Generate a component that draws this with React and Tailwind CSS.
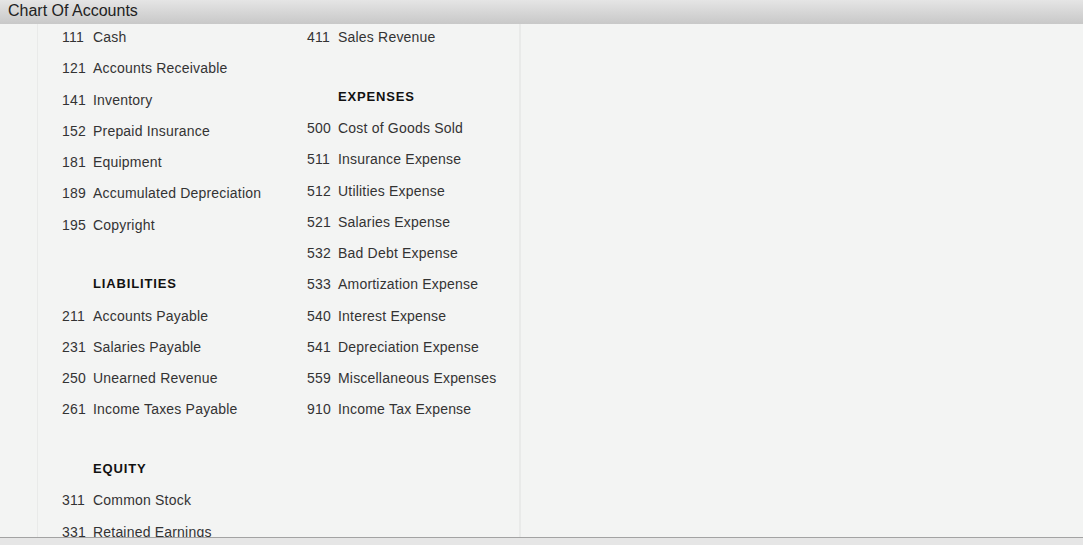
import React from "react";

const left = [
  ["111", "Cash"],
  ["121", "Accounts Receivable"],
  ["141", "Inventory"],
  ["152", "Prepaid Insurance"],
  ["181", "Equipment"],
  ["189", "Accumulated Depreciation"],
  ["195", "Copyright"],
  null,
  "LIABILITIES",
  ["211", "Accounts Payable"],
  ["231", "Salaries Payable"],
  ["250", "Unearned Revenue"],
  ["261", "Income Taxes Payable"],
  null,
  "EQUITY",
  ["311", "Common Stock"],
  ["331", "Retained Earnings"],
];

const right = [
  ["411", "Sales Revenue"],
  null,
  "EXPENSES",
  ["500", "Cost of Goods Sold"],
  ["511", "Insurance Expense"],
  ["512", "Utilities Expense"],
  ["521", "Salaries Expense"],
  ["532", "Bad Debt Expense"],
  ["533", "Amortization Expense"],
  ["540", "Interest Expense"],
  ["541", "Depreciation Expense"],
  ["559", "Miscellaneous Expenses"],
  ["910", "Income Tax Expense"],
];

function Column({ items }) {
  return (
    <div className="flex flex-col">
      {items.map((it, i) => {
        if (it === null) return <div key={i} className="h-[28.5px]" />;
        if (typeof it === "string")
          return (
            <div key={i} className="h-[31.25px] pt-[5px] pl-[31px] leading-4 text-[13px] font-bold tracking-[0.85px] text-[#111]">
              {it}
            </div>
          );
        return (
          <div key={i} className="h-[31.25px] pt-[5px] flex leading-4 text-[14px] tracking-[0.2px] text-[#333] whitespace-nowrap">
            <span className="w-[31px] shrink-0">{it[0]}</span>
            <span>{it[1]}</span>
          </div>
        );
      })}
    </div>
  );
}

export default function App() {
  return (
    <div className="w-[1083px] h-[545px] flex flex-col bg-[#e6e6e6] overflow-hidden" style={{ fontFamily: '"Liberation Sans", Arial, sans-serif' }}>
      <div className="h-[24px] shrink-0 bg-gradient-to-b from-[#e5e5e5] to-[#c8c8c8] px-[8px] text-[16px] leading-[22px] text-[#222]">
        Chart Of Accounts
      </div>
      <div className="h-[514px] shrink-0 bg-[#f3f4f3] border-b border-[#a3a3a3] overflow-hidden flex">
        <div className="ml-[37px] w-[484px] h-full border-l border-r-2 border-[#e9eae9] pl-[24px] grid grid-cols-[245px_1fr] content-start">
          <Column items={left} />
          <Column items={right} />
        </div>
      </div>
    </div>
  );
}
